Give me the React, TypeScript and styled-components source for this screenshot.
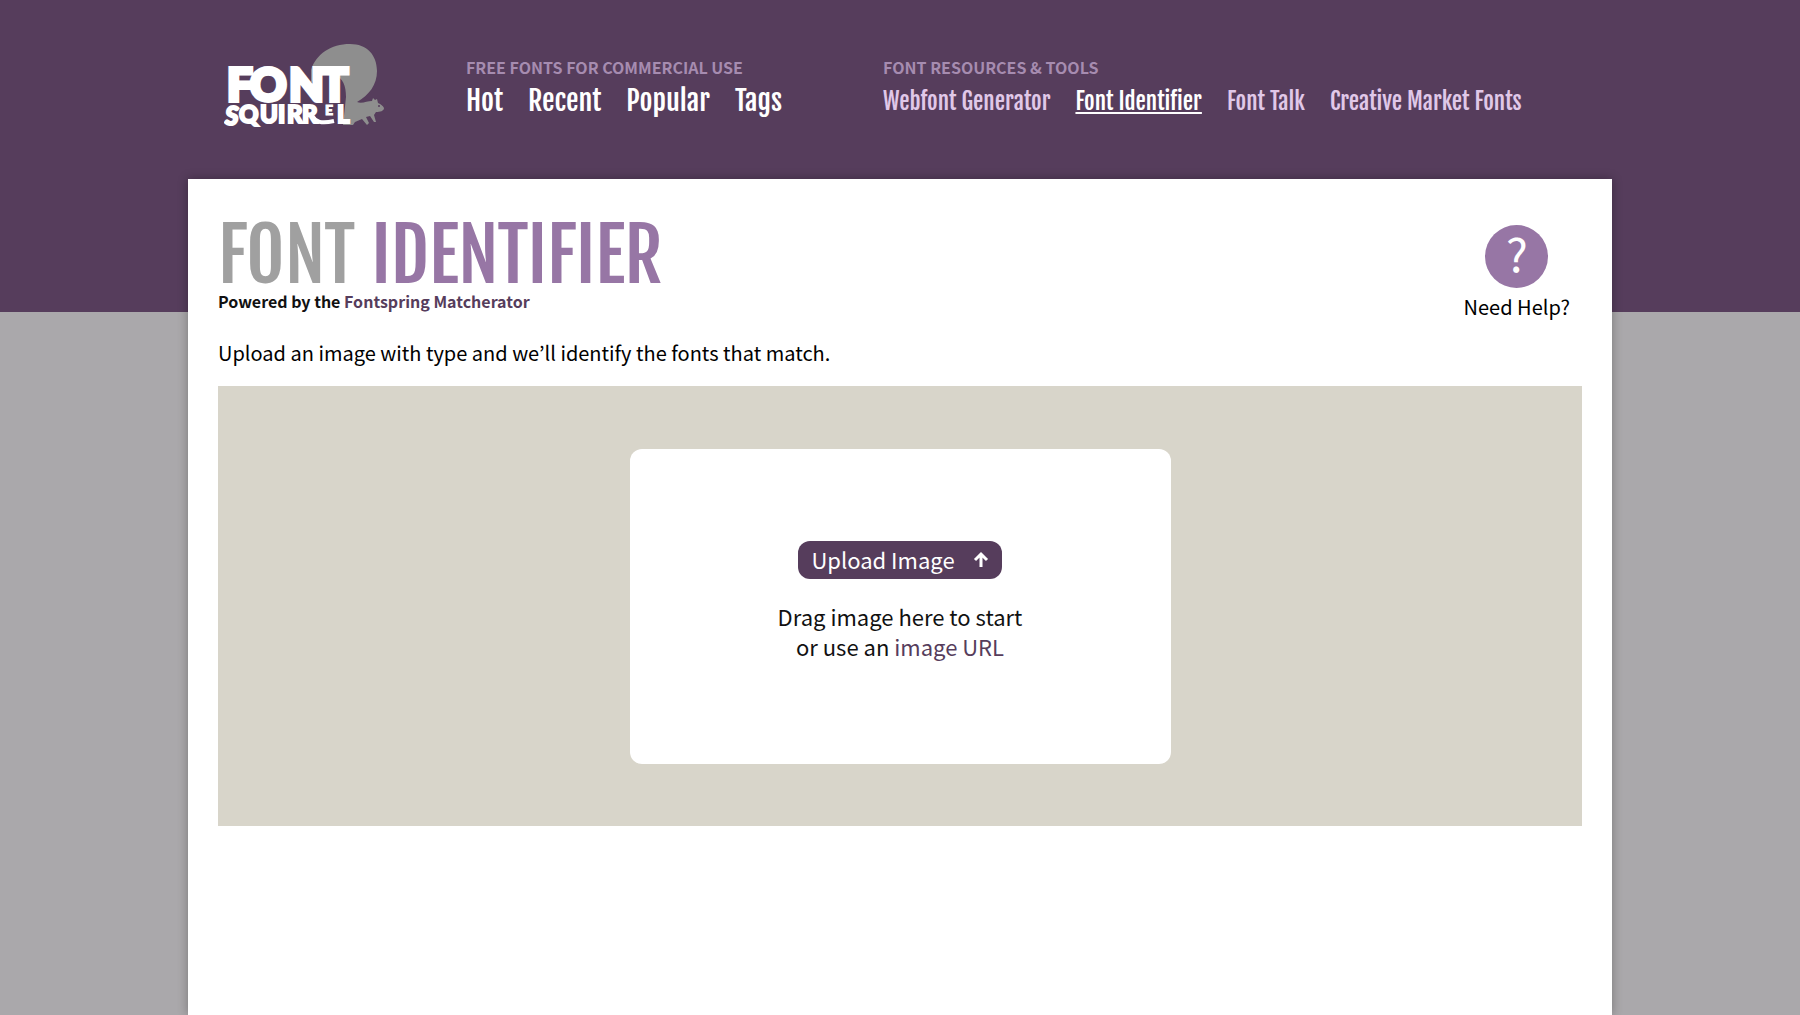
import React from 'react';
import styled, { createGlobalStyle } from 'styled-components';

const sans = '"Noto Sans CJK KR", "Noto Sans", sans-serif';
const display = '"Fjalla One", "Roboto Condensed", sans-serif';

const GlobalStyle = createGlobalStyle`
  *, *::before, *::after { box-sizing: border-box; }
  body {
    margin: 0;
    background: #aaa8ab linear-gradient(#563d5c, #563d5c) top / 100% 312px no-repeat;
    color: #111;
    font-family: ${sans};
    font-size: 20px;
    line-height: 30px;
  }
  a { color: #563d5c; text-decoration: none; }
`;

const Page = styled.div`
  display: flex;
  flex-direction: column;
  min-height: 100vh;
  width: 100%;
  max-width: 1424px;
  margin: 0 auto;
`;

const Header = styled.header`
  display: flex;
  align-items: flex-start;
  padding: 40px 36px 43px;
`;

const LogoLink = styled.a`
  display: block;
  width: 164px;
  height: 96px;
  margin-right: 78px;
`;

const NavGroup = styled.nav`
  display: flex;
  flex-direction: column;
  padding-top: 15px;
  margin-right: 101px;
  &:last-child { margin-right: 0; }
`;

const NavLabel = styled.h2`
  margin: 0;
  color: #a68cb0;
  font-size: 16px;
  font-weight: 700;
  line-height: 24px;
  text-transform: uppercase;
`;

const NavList = styled.ul`
  display: flex;
  gap: 25px;
  margin: 0;
  padding: 0;
  list-style: none;
`;

const NavLink = styled.a<{ $large?: boolean; $active?: boolean }>`
  display: block;
  color: ${(p) => (p.$active || p.$large ? '#fff' : '#e0c8e8')};
  font-family: ${display};
  font-size: ${(p) => (p.$large ? 28 : 23)}px;
  line-height: ${(p) => (p.$large ? 44 : 46)}px;
  text-decoration: ${(p) => (p.$active ? 'underline' : 'none')};
  text-decoration-thickness: 2px;
  text-underline-offset: 2px;
  white-space: nowrap;
`;

const Card = styled.main`
  flex: 1;
  padding: 38px 30px;
  background: #fff;
  box-shadow: 0 0 10px rgba(0, 0, 0, 0.3);
`;

const Intro = styled.div`
  display: flex;
  justify-content: space-between;
`;

const Title = styled.h1`
  margin: 0;
  color: #a0a0a0;
  font-family: ${display};
  font-size: 74px;
  font-weight: 400;
  line-height: 76px;
  text-transform: uppercase;
  span { color: #9776a5; }
`;

const Powered = styled.p`
  margin: 0;
  font-size: 16px;
  font-weight: 700;
  line-height: 16px;
`;

const Lead = styled.p`
  margin: 29px 0 18px;
  color: #000;
`;

const Help = styled.a`
  display: flex;
  flex-direction: column;
  align-items: center;
  gap: 4px;
  padding: 8px 12px 0;
  color: #000;
`;

const HelpMark = styled.span`
  display: flex;
  align-items: center;
  justify-content: center;
  width: 63px;
  height: 63px;
  padding-bottom: 10px;
  border-radius: 50%;
  background: #9776a5;
  color: #fff;
  font-size: 46px;
`;

const DropZone = styled.section`
  display: flex;
  justify-content: center;
  padding: 63px 30px 62px;
  background: #d8d5ca;
`;

const DropBox = styled.div`
  display: flex;
  flex-direction: column;
  align-items: center;
  width: 541px;
  min-height: 315px;
  padding: 92px 20px;
  border-radius: 12px;
  background: #fff;
`;

const UploadButton = styled.button`
  display: flex;
  align-items: center;
  gap: 18px;
  height: 38px;
  padding: 0 13px 2px;
  border: 0;
  border-radius: 12px;
  background: #563d5c;
  color: #fff;
  font: 22px/36px ${sans};
`;

const DropHint = styled.p`
  margin: 22px 0 0;
  font-size: 22px;
  text-align: center;
`;

const Lettering = styled.g`
  fill: #fff;
  stroke: #fff;
  font-family: Lato, sans-serif;
  font-weight: 900;
`;

const Logo = () => (
  <svg width="164" height="96" viewBox="0 0 164 96" role="img" aria-label="Font Squirrel">
    <path
      fill="#8e8e8e"
      d="M87 30C92 14 107 4 126 4c17 0 27 11 27 27 0 14-8 24-20 31 5 2 10-1 15-1l1-3 2 2 2-1 1 4c3 1 5 3 6 5 0 3-4 4-8 4l-2 3 2 7-2 0-4-6-4 1 3 6-2 2-5-6-7 3-2 3H119L122 57c0-11-3-19-11-22-8-3-17 1-24 8z"
    />
    <circle cx="155" cy="66" r="1" fill="#563d5c" />
    <Lettering>
      <text x="3 26 65 97" y="61" fontSize="45" strokeWidth="4">FONT</text>
      <text x="1" y="85" fontSize="26" fontStyle="italic" strokeWidth="2">S</text>
      <text x="15 36 54 63 78" y="83" fontSize="24" strokeWidth="2">QUIRR</text>
      <text x="101" y="75" fontSize="14" strokeWidth="1">E</text>
      <text x="113" y="83" fontSize="24" strokeWidth="2">L</text>
    </Lettering>
    <path d="M88 76c4 6 9 8 22 5" fill="none" stroke="#fff" strokeWidth="4" />
  </svg>
);

const UploadArrow = () => (
  <svg width="16" height="16" viewBox="0 0 16 16" aria-hidden="true">
    <path d="M8 16V3M2 9l6-6 6 6" fill="none" stroke="#fff" strokeWidth="3" />
  </svg>
);

const fontLinks = ['Hot', 'Recent', 'Popular', 'Tags'];
const toolLinks = ['Webfont Generator', 'Font Identifier', 'Font Talk', 'Creative Market Fonts'];

export default function App() {
  return (
    <>
      <GlobalStyle />
      <Page>
        <Header>
          <LogoLink href="#"><Logo /></LogoLink>
          <NavGroup aria-labelledby="fonts-label">
            <NavLabel id="fonts-label">Free fonts for commercial use</NavLabel>
            <NavList>
              {fontLinks.map((name) => (
                <li key={name}><NavLink href="#" $large>{name}</NavLink></li>
              ))}
            </NavList>
          </NavGroup>
          <NavGroup aria-labelledby="tools-label">
            <NavLabel id="tools-label">Font resources &amp; tools</NavLabel>
            <NavList>
              {toolLinks.map((name) => (
                <li key={name}><NavLink href="#" $active={name === 'Font Identifier'}>{name}</NavLink></li>
              ))}
            </NavList>
          </NavGroup>
        </Header>
        <Card>
          <Intro>
            <div>
              <Title>Font <span>Identifier</span></Title>
              <Powered>Powered by the <a href="#">Fontspring Matcherator</a></Powered>
              <Lead>Upload an image with type and we’ll identify the fonts that match.</Lead>
            </div>
            <Help href="#"><HelpMark>?</HelpMark>Need Help?</Help>
          </Intro>
          <DropZone>
            <DropBox>
              <UploadButton type="button">Upload Image <UploadArrow /></UploadButton>
              <DropHint>Drag image here to start<br />or use an <a href="#">image URL</a></DropHint>
            </DropBox>
          </DropZone>
        </Card>
      </Page>
    </>
  );
}
